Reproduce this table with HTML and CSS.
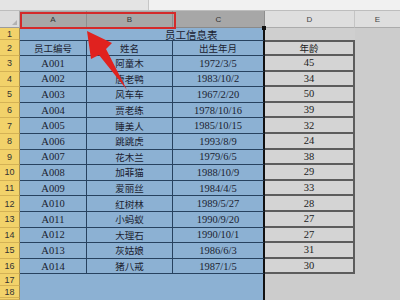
FILE: index.html
```html
<!DOCTYPE html>
<html lang="zh">
<head>
<meta charset="utf-8">
<title>员工信息表</title>
<link rel="stylesheet" href="styles.css">
</head>
<body>
<div class="toolbar"><div class="tb-left"></div><div class="tb-right"></div></div>
<div class="sheet">
  <div class="corner"><span class="tri"></span></div>
  <div class="ch sel">A</div>
  <div class="ch sel">B</div>
  <div class="ch sel">C</div>
  <div class="ch">D</div>
  <div class="ch last">E</div>
  <div class="ecol"></div>

  <div class="rn">1</div>
  <div class="title">员工信息表</div>
  <div class="d1"></div>

  <div class="rn">2</div>
  <div class="c top cjk">员工编号</div>
  <div class="c top cjk">姓名</div>
  <div class="c top cjk lastc">出生年月</div>
  <div class="d top cjk">年龄</div>

  <div class="rn">3</div><div class="c">A001</div><div class="c cjk">阿童木</div><div class="c lastc">1972/3/5</div><div class="d">45</div>
  <div class="rn">4</div><div class="c">A002</div><div class="c cjk">唐老鸭</div><div class="c lastc">1983/10/2</div><div class="d">34</div>
  <div class="rn">5</div><div class="c">A003</div><div class="c cjk">风车车</div><div class="c lastc">1967/2/20</div><div class="d">50</div>
  <div class="rn">6</div><div class="c">A004</div><div class="c cjk">贾老练</div><div class="c lastc">1978/10/16</div><div class="d">39</div>
  <div class="rn">7</div><div class="c">A005</div><div class="c cjk">睡美人</div><div class="c lastc">1985/10/15</div><div class="d">32</div>
  <div class="rn">8</div><div class="c">A006</div><div class="c cjk">跳跳虎</div><div class="c lastc">1993/8/9</div><div class="d">24</div>
  <div class="rn">9</div><div class="c">A007</div><div class="c cjk">花木兰</div><div class="c lastc">1979/6/5</div><div class="d">38</div>
  <div class="rn">10</div><div class="c">A008</div><div class="c cjk">加菲猫</div><div class="c lastc">1988/10/9</div><div class="d">29</div>
  <div class="rn">11</div><div class="c">A009</div><div class="c cjk">爱丽丝</div><div class="c lastc">1984/4/5</div><div class="d">33</div>
  <div class="rn">12</div><div class="c">A010</div><div class="c cjk">红树林</div><div class="c lastc">1989/5/27</div><div class="d">28</div>
  <div class="rn">13</div><div class="c">A011</div><div class="c cjk">小蚂蚁</div><div class="c lastc">1990/9/20</div><div class="d">27</div>
  <div class="rn">14</div><div class="c">A012</div><div class="c cjk">大理石</div><div class="c lastc">1990/10/1</div><div class="d">27</div>
  <div class="rn">15</div><div class="c">A013</div><div class="c cjk">灰姑娘</div><div class="c lastc">1986/6/3</div><div class="d">31</div>
  <div class="rn">16</div><div class="c">A014</div><div class="c cjk">猪八戒</div><div class="c lastc">1987/1/5</div><div class="d">30</div>

  <div class="rn">17</div>
  <div class="bfill"></div>
  <div class="dfill"></div>
  <div class="rn">18</div>
  <div class="rn"></div>
</div>

<div class="handle"></div>
<div class="redbox"></div>
<svg class="arrow" width="400" height="300" viewBox="0 0 400 300">
  <polygon points="87,31 112,43 106,49 127,90 99,55 91,59" fill="#e0221f"/>
</svg>
</body>
</html>
```

FILE: styles.css
```css
html, body {
  margin: 0;
  width: 400px;
  height: 300px;
  overflow: hidden;
}
body {
  position: relative;
  background: #cccccc;
  font-family: "Liberation Serif", "Noto Sans CJK SC", serif;
  color: #1b2230;
}
.toolbar {
  display: flex;
  height: 11px;
  box-sizing: border-box;
  border-bottom: 1px solid #bdbdbd;
}
.tb-left {
  width: 148px;
  background: #e4e4e4;
  border-right: 1px solid #c6c6c6;
}
.tb-right {
  flex: 1;
  background: #f1f1f1;
}
.sheet {
  display: grid;
  grid-template-columns: 20px 67px 86px 92px 90px 1fr;
  grid-template-rows: 17px 12px 16px repeat(14, 15.6px) 12px 12px 1fr;
  height: 289px;
}
.sheet > div {
  box-sizing: border-box;
}
.corner {
  background: #dcdcdc;
  border-right: 1px solid #aaaaaa;
  border-bottom: 1px solid #9c9c9c;
  display: flex;
  align-items: flex-end;
  justify-content: flex-end;
  padding: 0 2px 2px 0;
}
.tri {
  width: 0;
  height: 0;
  border-left: 5px solid transparent;
  border-bottom: 5px solid #b2b2b2;
}
.ch {
  display: flex;
  align-items: center;
  justify-content: center;
  font: 8px "Liberation Sans", sans-serif;
  color: #444;
  background: #dedede;
  border-right: 1px solid #c4c4c4;
  border-bottom: 1px solid #ababab;
}
.ch.sel {
  background: #a7a7a7;
  border-right-color: #8e8e8e;
  border-bottom-color: #8a8a8a;
  color: #333;
}
.ch.last {
  border-right: none;
}
.ecol {
  grid-column: 6;
  grid-row: 2 / -1;
  background: #cccccc;
}
.rn {
  display: flex;
  align-items: center;
  justify-content: center;
  font: 9px "Liberation Sans", sans-serif;
  color: #333;
  background: #f2d26a;
  border-right: 1px solid #a89050;
  border-bottom: 1px solid #d4b255;
}
.title {
  grid-column: span 3;
  display: flex;
  align-items: center;
  padding-left: 145px;
  background: #8cb1d3;
  border-right: 2px solid #111;
  font-size: 10.5px;
}
.d1 {
  background: #cfcfcf;
}
.c {
  display: flex;
  align-items: center;
  justify-content: center;
  background: #8cb1d3;
  border-right: 1px solid #27425f;
  border-bottom: 1px solid #27425f;
  font-size: 10.5px;
}
.c.top {
  border-top: 1px solid #27425f;
}
.c.lastc {
  border-right: 2px solid #111;
}
.d {
  display: flex;
  align-items: center;
  justify-content: center;
  background: #d4d4d4;
  border-right: 2px solid #5c5c5c;
  border-bottom: 2px solid #5c5c5c;
  font-size: 10.5px;
  color: #222;
}
.d.top {
  border-top: 2px solid #5c5c5c;
}
.c.cjk,
.d.cjk {
  font-size: 9.5px;
}
.bfill {
  grid-column: span 3;
  grid-row: span 3;
  background: #8cb1d3;
  border-right: 2px solid #111;
}
.dfill {
  grid-row: span 3;
  background: #cccccc;
}
.handle {
  position: absolute;
  left: 262px;
  top: 26px;
  width: 4px;
  height: 4px;
  background: #111;
}
.redbox {
  position: absolute;
  left: 20px;
  top: 12px;
  width: 156px;
  height: 17px;
  box-sizing: border-box;
  border: 2px solid #d42a2a;
}
.arrow {
  position: absolute;
  left: 0;
  top: 0;
  pointer-events: none;
}
```
